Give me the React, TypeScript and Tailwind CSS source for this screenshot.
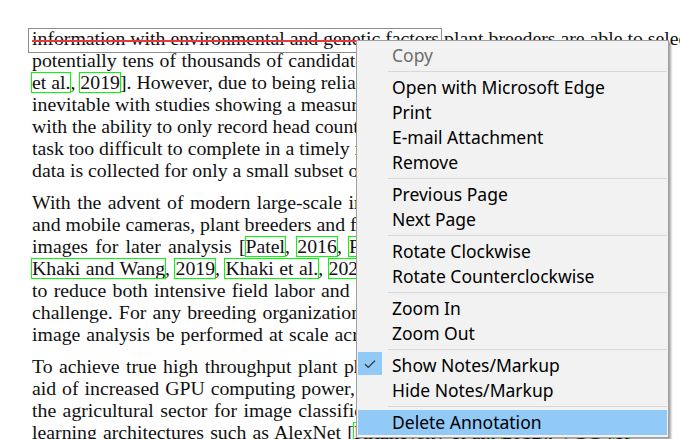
import React from "react";

type Item = { label: string; disabled?: boolean; checked?: boolean; active?: boolean };

const groups: Item[][] = [
  [{ label: "Copy", disabled: true }],
  [
    { label: "Open with Microsoft Edge" },
    { label: "Print" },
    { label: "E-mail Attachment" },
    { label: "Remove" },
  ],
  [{ label: "Previous Page" }, { label: "Next Page" }],
  [{ label: "Rotate Clockwise" }, { label: "Rotate Counterclockwise" }],
  [{ label: "Zoom In" }, { label: "Zoom Out" }],
  [{ label: "Show Notes/Markup", checked: true }, { label: "Hide Notes/Markup" }],
  [{ label: "Delete Annotation", active: true }],
];

function Cite({ children }: { children: React.ReactNode }) {
  return (
    <span className="inline-block leading-[19px] outline outline-1 outline-[#00ff00]">{children}</span>
  );
}

function MenuRow({ item }: { item: Item }) {
  return (
    <div
      className={
        "relative flex h-[25px] items-center pl-[34px] " +
        (item.active ? "bg-[#91c9f7] " : "") +
        (item.disabled ? "text-[#6d6d6d]" : "text-black")
      }
    >
      {item.checked && (
        <div className="absolute left-0 top-[-1px] flex h-[23px] w-[24px] items-center justify-center bg-[#91c9f7]">
          <svg width="12" height="10" viewBox="0 0 12 10">
            <path d="M1 5.2 L4.3 8.4 L11 1.6" fill="none" stroke="#333" strokeWidth="1.3" />
          </svg>
        </div>
      )}
      {item.label}
    </div>
  );
}

export default function App() {
  return (
    <div className="relative h-[439px] w-[680px] overflow-hidden bg-white">
      <div className="whitespace-nowrap pl-8 pt-[27px] font-['Liberation_Serif',serif] text-[19.8px] leading-[22px] text-[#111]">
        <div>
          <div>
            <span className="relative">
              information with environmental and genetic factors
              <span className="absolute -left-1 -right-[3px] top-[1px] h-[25px] border border-[#8c8c8c]" />
              <span className="absolute left-0 right-0 top-[13px] h-[2px] bg-[#e8383d]" />
            </span>{" "}
            plant breeders are able to select
          </div>
          <div className="[word-spacing:0.6px]">
            potentially tens of thousands of candidates for further field trials based on
          </div>
          <div>
            <Cite>et al.</Cite>, <Cite>2019</Cite>]. However, due to being reliant on manual labor, error; this
          </div>
          <div>inevitable with studies showing a measurement error of up to 30% in this</div>
          <div>with the ability to only record head counts for a few plots, making the</div>
          <div>task too difficult to complete in a timely manner. As a result, phenotype a</div>
          <div>data is collected for only a small subset of the breeding program a</div>
        </div>
        <div className="mt-[10px]">
          <div className="[word-spacing:1.5px]">
            With the advent of modern large-scale imaging platforms, such as drones
          </div>
          <div>and mobile cameras, plant breeders and farmers can now collect thousands or</div>
          <div className="[word-spacing:2.3px]">
            images for later analysis [<Cite>Patel</Cite>, <Cite>2016</Cite>, <Cite>Pound et al.</Cite>,{" "}
            <Cite>2017</Cite>, <Cite>Pe</Cite>
          </div>
          <div className="[word-spacing:0.5px]">
            <Cite>Khaki and Wang</Cite>, <Cite>2019</Cite>, <Cite>Khaki et al.</Cite>, <Cite>2020</Cite>]. These
            images can then be used
          </div>
          <div className="[word-spacing:1.3px]">
            to reduce both intensive field labor and human error, but this presents a new
          </div>
          <div className="[word-spacing:1.2px]">
            challenge. For any breeding organization to benefit from these images, th
          </div>
          <div className="[word-spacing:1px]">image analysis be performed at scale across thousands of plots.</div>
        </div>
        <div className="mt-[10px]">
          <div className="[word-spacing:1.5px]">
            To achieve true high throughput plant phenotyping, researchers have recently
          </div>
          <div className="[word-spacing:1px]">
            aid of increased GPU computing power, adopted deep learning methods w
          </div>
          <div className="[word-spacing:1.5px]">
            the agricultural sector for image classification and object detection using
          </div>
          <div className="[word-spacing:1.2px]">
            learning architectures such as AlexNet [<Cite>Krizhevsky et al.</Cite>, <Cite>2012</Cite>], VGG [
            <Cite>et</Cite>
          </div>
        </div>
      </div>

      <div className="absolute left-[356px] top-[40px] w-[313px] border border-[#a0a0a0] bg-[#f2f2f2] px-px pb-[2px] pt-[2px] font-['Noto_Sans',sans-serif] text-[17.5px] shadow-[2px_2px_2px_rgba(0,0,0,0.35)]">
        {groups.map((g, gi) => (
          <div key={gi}>
            {gi > 0 && <div className="my-[3px] ml-[30px] h-px bg-[#d7d7d7]" />}
            {g.map((item) => (
              <MenuRow key={item.label} item={item} />
            ))}
          </div>
        ))}
      </div>
    </div>
  );
}
